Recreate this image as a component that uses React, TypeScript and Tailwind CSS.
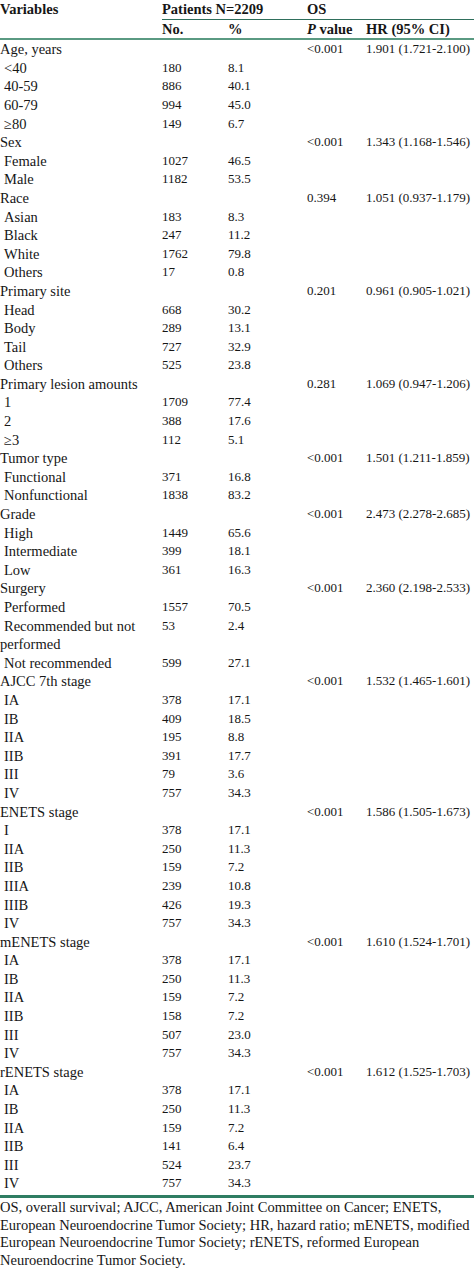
import React from 'react';

const groups: { title: string; p: string; hr: string; items: [string, string, string][] }[] = [
  { title: 'Age, years', p: '<0.001', hr: '1.901 (1.721-2.100)', items: [['<40', '180', '8.1'], ['40-59', '886', '40.1'], ['60-79', '994', '45.0'], ['≥80', '149', '6.7']] },
  { title: 'Sex', p: '<0.001', hr: '1.343 (1.168-1.546)', items: [['Female', '1027', '46.5'], ['Male', '1182', '53.5']] },
  { title: 'Race', p: '0.394', hr: '1.051 (0.937-1.179)', items: [['Asian', '183', '8.3'], ['Black', '247', '11.2'], ['White', '1762', '79.8'], ['Others', '17', '0.8']] },
  { title: 'Primary site', p: '0.201', hr: '0.961 (0.905-1.021)', items: [['Head', '668', '30.2'], ['Body', '289', '13.1'], ['Tail', '727', '32.9'], ['Others', '525', '23.8']] },
  { title: 'Primary lesion amounts', p: '0.281', hr: '1.069 (0.947-1.206)', items: [['1', '1709', '77.4'], ['2', '388', '17.6'], ['≥3', '112', '5.1']] },
  { title: 'Tumor type', p: '<0.001', hr: '1.501 (1.211-1.859)', items: [['Functional', '371', '16.8'], ['Nonfunctional', '1838', '83.2']] },
  { title: 'Grade', p: '<0.001', hr: '2.473 (2.278-2.685)', items: [['High', '1449', '65.6'], ['Intermediate', '399', '18.1'], ['Low', '361', '16.3']] },
  { title: 'Surgery', p: '<0.001', hr: '2.360 (2.198-2.533)', items: [['Performed', '1557', '70.5'], ['Recommended but not performed', '53', '2.4'], ['Not recommended', '599', '27.1']] },
  { title: 'AJCC 7th stage', p: '<0.001', hr: '1.532 (1.465-1.601)', items: [['IA', '378', '17.1'], ['IB', '409', '18.5'], ['IIA', '195', '8.8'], ['IIB', '391', '17.7'], ['III', '79', '3.6'], ['IV', '757', '34.3']] },
  { title: 'ENETS stage', p: '<0.001', hr: '1.586 (1.505-1.673)', items: [['I', '378', '17.1'], ['IIA', '250', '11.3'], ['IIB', '159', '7.2'], ['IIIA', '239', '10.8'], ['IIIB', '426', '19.3'], ['IV', '757', '34.3']] },
  { title: 'mENETS stage', p: '<0.001', hr: '1.610 (1.524-1.701)', items: [['IA', '378', '17.1'], ['IB', '250', '11.3'], ['IIA', '159', '7.2'], ['IIB', '158', '7.2'], ['III', '507', '23.0'], ['IV', '757', '34.3']] },
  { title: 'rENETS stage', p: '<0.001', hr: '1.612 (1.525-1.703)', items: [['IA', '378', '17.1'], ['IB', '250', '11.3'], ['IIA', '159', '7.2'], ['IIB', '141', '6.4'], ['III', '524', '23.7'], ['IV', '757', '34.3']] },
];

export default function App() {
  return (
    <div
      className="w-[474px] overflow-hidden bg-white text-[#161616] text-[14.5px] leading-[18.6px]"
      style={{ fontFamily: '"Liberation Serif", "DejaVu Serif", serif' }}
    >
      <table className="w-[474px] table-fixed border-collapse">
        <colgroup>
          <col className="w-[162px]" />
          <col className="w-[66px]" />
          <col className="w-[79px]" />
          <col className="w-[59px]" />
          <col className="w-[108px]" />
        </colgroup>
        <thead className="font-bold">
          <tr>
            <th className="p-0 text-left align-top h-[19px]">Variables</th>
            <th colSpan={2} className="p-0 text-left border-b border-[#2f6f5c]">Patients N=2209</th>
            <th colSpan={2} className="p-0 text-left border-b border-[#2f6f5c]">OS</th>
          </tr>
          <tr className="border-b-[2.5px] border-[#5a9a82]">
            <th className="p-0 h-[18px]"></th>
            <th className="p-0 text-left">No.</th>
            <th className="p-0 text-left">%</th>
            <th className="p-0 text-left"><i>P</i> value</th>
            <th className="p-0 text-left whitespace-nowrap">HR (95% CI)</th>
          </tr>
        </thead>
        <tbody>
          {groups.map((g) => (
            <React.Fragment key={g.title}>
              <tr>
                <td className="p-0 whitespace-nowrap">{g.title}</td>
                <td className="p-0"></td>
                <td className="p-0"></td>
                <td className="p-0 text-[13px]">{g.p}</td>
                <td className="p-0 whitespace-nowrap text-[13px]">{g.hr}</td>
              </tr>
              {g.items.map((it) => (
                <tr key={g.title + it[0]}>
                  <td className="p-0 pr-2 align-top">
                    {it[0].startsWith('Recommended') ? (
                      <>
                        <span className="pl-[4px]">Recommended but not</span>
                        <br />
                        performed
                      </>
                    ) : (
                      <span className="pl-[4px]">{it[0]}</span>
                    )}
                  </td>
                  <td className="p-0 align-top text-[13px]">{it[1]}</td>
                  <td className="p-0 align-top text-[13px]">{it[2]}</td>
                  <td className="p-0"></td>
                  <td className="p-0"></td>
                </tr>
              ))}
            </React.Fragment>
          ))}
        </tbody>
      </table>
      <div className="border-t-[3px] border-[#2e7d62] mt-[2px] pt-[1px] leading-[17.5px] text-[14.5px]">
        OS, overall survival; AJCC, American Joint Committee on Cancer; ENETS, European Neuroendocrine Tumor Society; HR, hazard ratio; mENETS, modified European Neuroendocrine Tumor Society; rENETS, reformed European Neuroendocrine Tumor Society.
      </div>
    </div>
  );
}
